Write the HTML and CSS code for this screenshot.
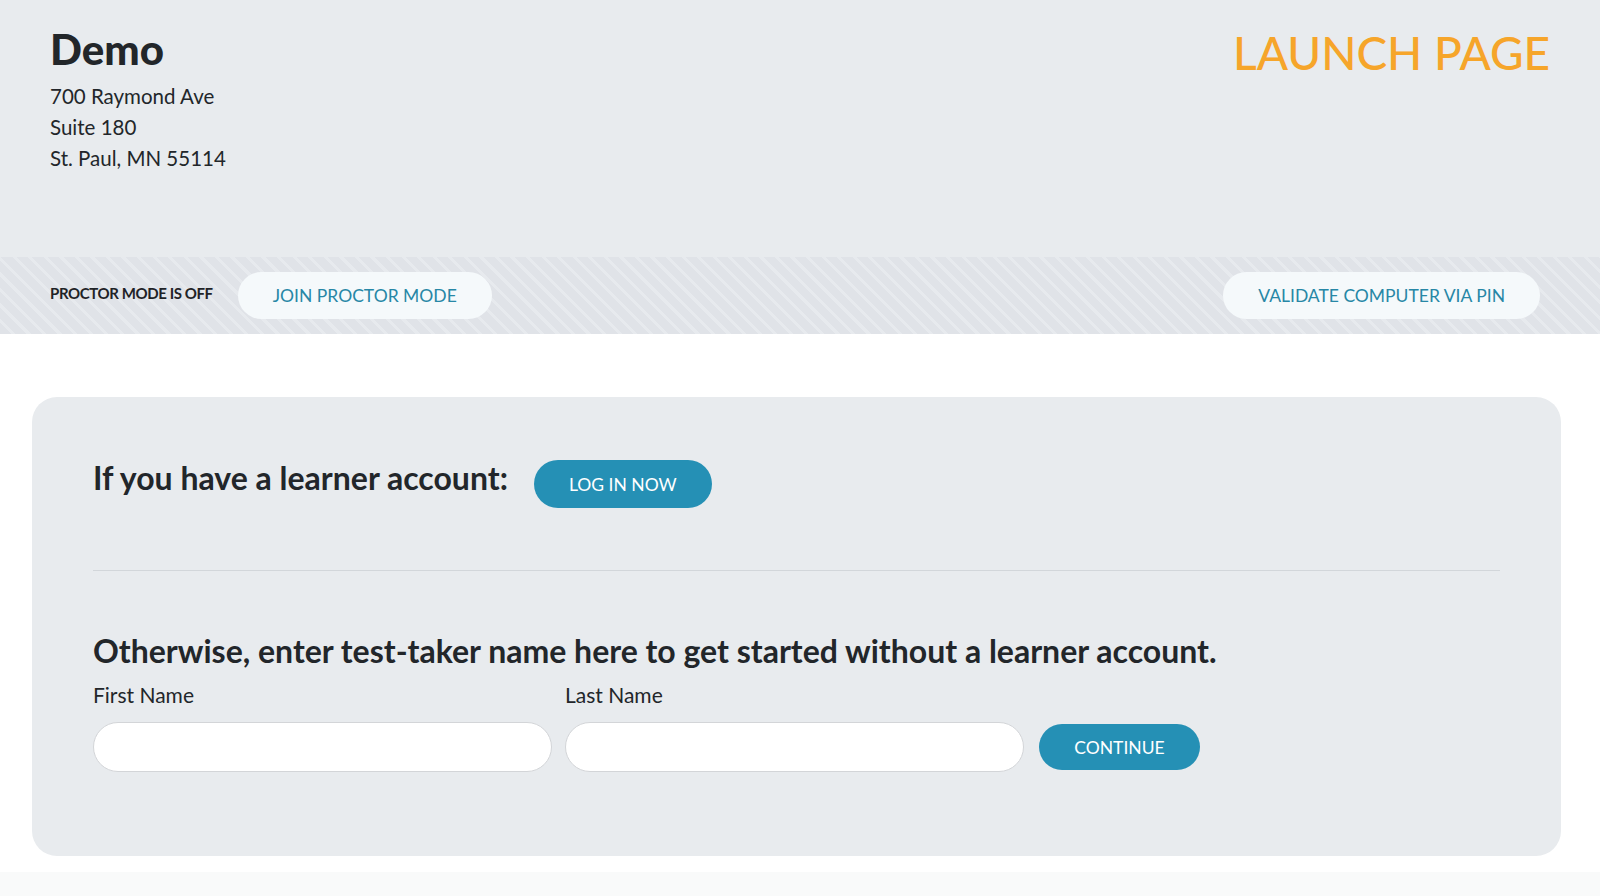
FILE: index.html
```html
<!DOCTYPE html>
<html lang="en">
<head>
  <meta charset="UTF-8">
  <meta name="viewport" content="width=device-width, initial-scale=1.0">
  <title>Launch Page</title>
  <link rel="stylesheet" href="styles.css">
</head>
<body>
  <header class="site-header">
    <div class="org">
      <h1 class="org-name">Demo</h1>
      <div class="org-address">
        700 Raymond Ave<br>
        Suite 180<br>
        St. Paul, MN 55114
      </div>
    </div>
    <div class="page-title">LAUNCH PAGE</div>
  </header>

  <div class="proctor-bar">
    <div class="proctor-left">
      <span class="proctor-status">PROCTOR MODE IS OFF</span>
      <button class="pill-light">JOIN PROCTOR MODE</button>
    </div>
    <button class="pill-light">VALIDATE COMPUTER VIA PIN</button>
  </div>

  <main class="main">
    <section class="start-card">
      <div class="login-row">
        <h2 class="card-heading login-heading">If you have a learner account:</h2>
        <button class="pill-blue login-btn">LOG IN NOW</button>
      </div>

      <hr class="divider">

      <h2 class="card-heading">Otherwise, enter test-taker name here to get started without a learner account.</h2>
      <div class="name-form">
        <div class="field">
          <label for="firstName">First Name</label>
          <input type="text" id="firstName">
        </div>
        <div class="field">
          <label for="lastName">Last Name</label>
          <input type="text" id="lastName">
        </div>
        <button class="pill-blue continue-btn">CONTINUE</button>
      </div>
    </section>
  </main>

  <footer class="footer"></footer>
</body>
</html>
```

FILE: styles.css
```css
body {
  margin: 0;
  font-family: 'Lato', 'Open Sans', sans-serif;
  color: #22262a;
  background: #fff;
}
button {
  font-family: inherit;
  cursor: pointer;
}
.site-header {
  display: flex;
  justify-content: space-between;
  align-items: flex-start;
  height: 257px;
  box-sizing: border-box;
  padding: 24px 50px 0 50px;
  background-color: #e8ebee;
}
.org-name {
  margin: 0;
  font-size: 42px;
  line-height: 1.2;
  font-weight: 900;
}
.org-address {
  margin-top: 7px;
  font-size: 20.5px;
  line-height: 31px;
}
.page-title {
  margin-top: 1px;
  font-size: 46px;
  line-height: 1.2;
  font-weight: 500;
  color: #f6a52a;
}
.proctor-bar {
  display: flex;
  justify-content: space-between;
  align-items: center;
  height: 77px;
  padding: 0 60px 0 50px;
  background-color: #e0e3e8;
  background-image: repeating-linear-gradient(45deg, #e0e3e8 0, #e0e3e8 8px, #e7eaee 8px, #e7eaee 11px);
}
.proctor-left {
  display: flex;
  align-items: center;
}
.proctor-status {
  font-size: 15px;
  font-weight: 700;
  letter-spacing: -0.4px;
  color: #1f2327;
  margin-right: 25px;
  margin-bottom: 5px;
}
.pill-light {
  height: 47px;
  padding: 0 35px;
  border: none;
  border-radius: 24px;
  background: #f5f9fb;
  color: #2787a6;
  font-size: 17.5px;
}
.main {
  padding: 63px 39px 16px 32px;
}
.start-card {
  background-color: #e8ebee;
  border-radius: 25px;
  padding: 63px 61px 84px 61px;
}
.login-row {
  display: flex;
  align-items: flex-start;
  gap: 26px;
}
.card-heading {
  margin: 0;
  font-size: 32px;
  line-height: 40px;
  font-weight: 700;
  color: #22262a;
}
.login-heading {
  margin-top: -2px;
}
.pill-blue {
  border: none;
  border-radius: 24px;
  background: #2590b5;
  color: #fff;
  font-size: 17.5px;
}
.login-btn {
  height: 48px;
  padding: 0 35px;
}
.divider {
  border: none;
  border-top: 1px solid #d2d6da;
  margin: 62px 0 60px 0;
}
.name-form {
  display: flex;
  align-items: flex-end;
  margin-top: 12px;
}
.field {
  display: flex;
  flex-direction: column;
  margin-right: 13px;
}
.field label {
  font-size: 21px;
  line-height: 24px;
  margin-bottom: 15px;
}
.field input {
  width: 459px;
  height: 50px;
  box-sizing: border-box;
  border: 1px solid #d3d5d8;
  border-radius: 25px;
  background: #fff;
  padding: 0 20px;
  font-size: 18px;
  font-family: inherit;
}
.continue-btn {
  height: 46px;
  width: 161px;
  margin-left: 2px;
  margin-bottom: 2px;
}
.footer {
  height: 40px;
  background: #f9fafa;
}
```
